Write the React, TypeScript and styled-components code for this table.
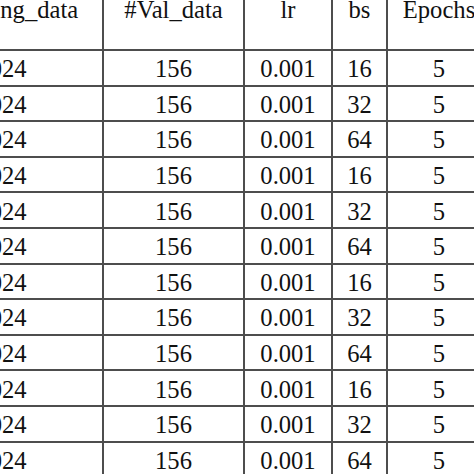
import React from "react";
import styled, { createGlobalStyle } from "styled-components";

const Global = createGlobalStyle`
  html, body {
    margin: 0;
    padding: 0;
    background: #ffffff;
    overflow: hidden;
  }
  body {
    width: 474px;
    height: 474px;
  }
`;

const Page = styled.div`
  width: 474px;
  height: 474px;
  overflow: hidden;
  background: #ffffff;
`;

const Table = styled.div`
  display: grid;
  grid-template-columns: 197px 141px 88px 55px 104px;
  grid-template-rows: 51px repeat(12, 35.6px);
  margin-left: -93px;
  width: max-content;
  font-family: "Liberation Serif", "Times New Roman", serif;
  font-size: 24.6px;
  color: #111111;
`;

const BaseCell = styled.div<{ $shift?: number }>`
  box-sizing: border-box;
  border-right: 2px solid #4d4d4d;
  border-bottom: 2px solid #4d4d4d;
  display: flex;
  justify-content: center;
  white-space: nowrap;
  padding-left: ${(p) => (p.$shift && p.$shift > 0 ? p.$shift * 2 : 0)}px;
  padding-right: ${(p) => (p.$shift && p.$shift < 0 ? -p.$shift * 2 : 0)}px;
`;

const HeaderCell = styled(BaseCell)`
  align-items: flex-start;
  line-height: 20px;
  padding-top: 0;
`;

const Cell = styled(BaseCell)`
  align-items: center;
  line-height: 27px;
  padding-top: 2px;
`;

const headers = ["#Training_data", "#Val_data", "lr", "bs", "Epochs"];
const batchSizes = [16, 32, 64, 16, 32, 64, 16, 32, 64, 16, 32, 64];

export default function App() {
  return (
    <Page>
      <Global />
      <Table>
        {headers.map((h, i) => (
          <HeaderCell key={h} $shift={i === 0 ? -1 : 0}>
            {h}
          </HeaderCell>
        ))}
        {batchSizes.map((bs, i) => (
          <React.Fragment key={i}>
            <Cell $shift={-2.5}>1024</Cell>
            <Cell>156</Cell>
            <Cell>0.001</Cell>
            <Cell>{bs}</Cell>
            <Cell>5</Cell>
          </React.Fragment>
        ))}
      </Table>
    </Page>
  );
}
